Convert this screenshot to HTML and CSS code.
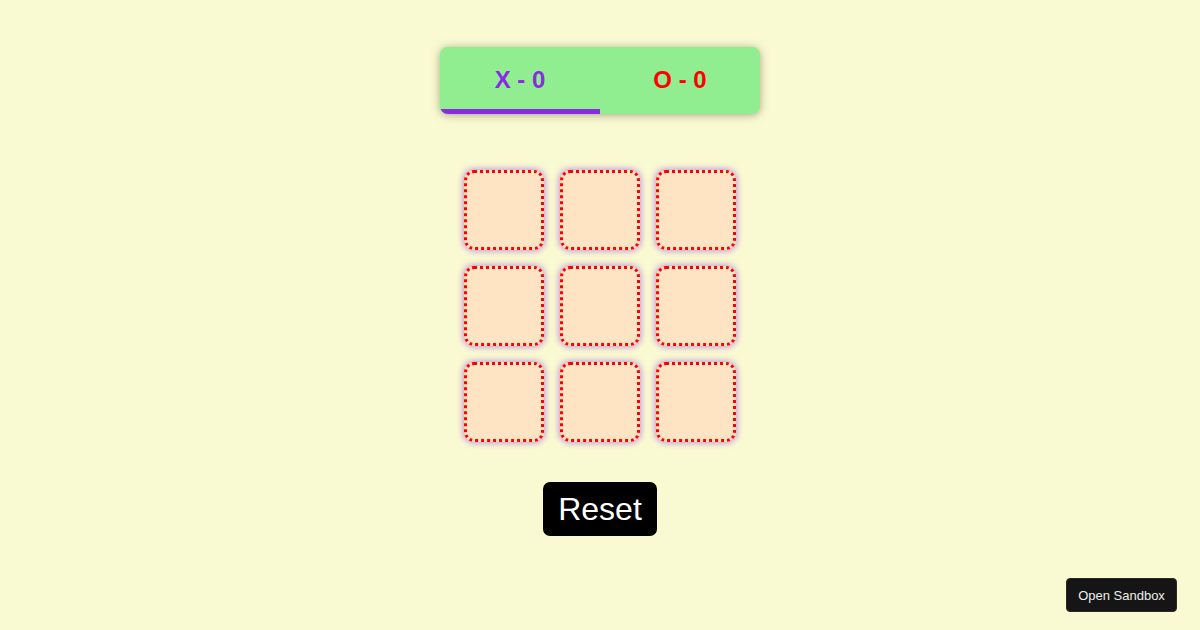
FILE: index.html
```html
<!DOCTYPE html>
<html>
<head>
<meta charset="utf-8">
<link rel="stylesheet" href="styles.css">
</head>
<body>
<main class="app">
  <div class="board-score">
    <div class="score score-x">X - 0</div>
    <div class="score score-o">O - 0</div>
    <div class="indicator"></div>
  </div>
  <div class="grid">
    <div class="cell"></div><div class="cell"></div><div class="cell"></div>
    <div class="cell"></div><div class="cell"></div><div class="cell"></div>
    <div class="cell"></div><div class="cell"></div><div class="cell"></div>
  </div>
  <button class="reset">Reset</button>
</main>
<button class="sandbox">Open Sandbox</button>
</body>
</html>
```

FILE: styles.css
```css
html, body {
  margin: 0;
  height: 100%;
  background: #fafad2;
  font-family: "Liberation Sans", Arial, sans-serif;
}
.app {
  display: flex;
  flex-direction: column;
  align-items: center;
  padding-top: 47px;
}
.board-score {
  position: relative;
  width: 320px;
  height: 67px;
  background: #90ee90;
  border-radius: 8px;
  box-shadow: 0 1px 8px rgba(80, 80, 50, 0.5);
  display: flex;
  overflow: hidden;
}
.score {
  flex: 1;
  display: flex;
  align-items: center;
  justify-content: center;
  font-size: 24px;
  font-weight: bold;
  padding-bottom: 2px;
}
.score-x { color: #8a2be2; }
.score-o { color: #ff0000; }
.indicator {
  position: absolute;
  left: 0;
  bottom: 0;
  width: 160px;
  height: 5px;
  background: #8a2be2;
}
.grid {
  margin-top: 56px;
  display: grid;
  grid-template-columns: repeat(3, 80px);
  grid-auto-rows: 80px;
  gap: 16px;
}
.cell {
  box-sizing: border-box;
  background: #ffe4c4;
  border: 3px dotted #ff0000;
  border-radius: 10px;
  box-shadow: 0 0 6px 1px rgba(138, 43, 226, 0.5);
}
.reset {
  margin-top: 40px;
  background: #000;
  color: #fff;
  border: none;
  border-radius: 7px;
  font-family: "Liberation Sans", Arial, sans-serif;
  font-size: 32px;
  height: 54px;
  padding: 0 15px;
  cursor: pointer;
}
.sandbox {
  position: fixed;
  right: 23px;
  bottom: 18px;
  width: 111px;
  height: 34px;
  background: #151515;
  color: #eeeeee;
  border: 1px solid #2a2a2a;
  border-radius: 4px;
  font-family: "Liberation Sans", Arial, sans-serif;
  font-size: 13px;
  padding: 0;
}
```
